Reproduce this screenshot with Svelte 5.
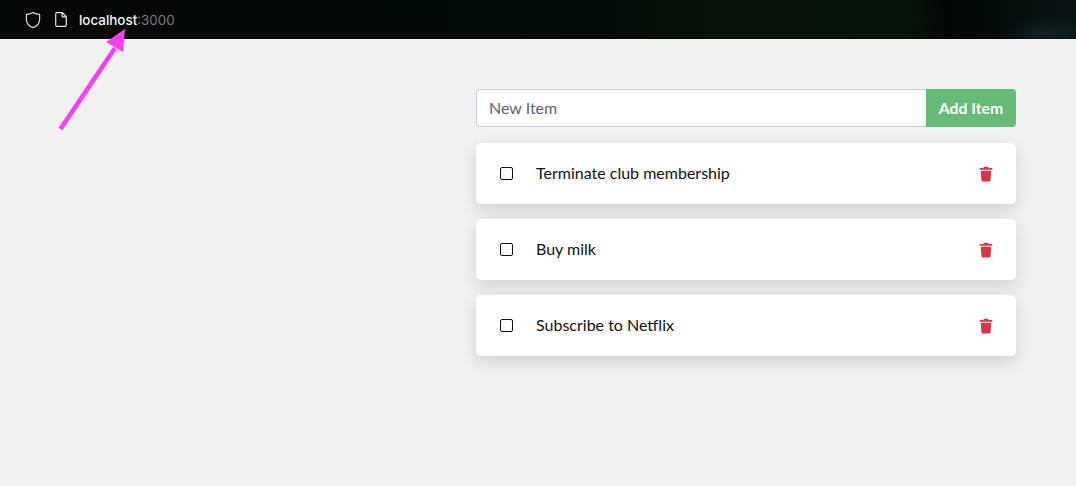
<script>
	let items = [
		{ id: 1, text: 'Terminate club membership' },
		{ id: 2, text: 'Buy milk' },
		{ id: 3, text: 'Subscribe to Netflix' }
	];
</script>

<div class="page">
	<header class="urlbar">
		<svg class="shield" width="16" height="18" viewBox="0 0 16 18">
			<path d="M8 1.4 C10 2.6 12 3.2 14.6 3.4 V8.5 C14.6 12.4 11.8 15.2 8 16.6 C4.2 15.2 1.4 12.4 1.4 8.5 V3.4 C4 3.2 6 2.6 8 1.4 Z" fill="none" stroke="#d8dad9" stroke-width="1.2" stroke-linejoin="round"/>
		</svg>
		<svg class="doc" width="12" height="15" viewBox="0 0 12 15">
			<path d="M2 .7 H7.4 L11.3 4.6 V13 Q11.3 14.3 10 14.3 H2 Q.7 14.3 .7 13 V2 Q.7 .7 2 .7 Z M7.2 .9 V4.8 H11.1" fill="none" stroke="#e4e6e5" stroke-width="1.2" stroke-linejoin="round"/>
		</svg>
		<span class="host">localhost<span class="port">:3000</span></span>
	</header>

	<main class="content">
		<div class="list">
			<form class="add" on:submit|preventDefault>
				<input type="text" placeholder="New Item" />
				<button type="submit">Add Item</button>
			</form>

			{#each items as item (item.id)}
				<div class="card">
					<span class="check"></span>
					<span class="label">{item.text}</span>
					<svg class="trash" width="14" height="16" viewBox="0 0 14 16">
						<path d="M5 .8 H9 L9.6 2 H13.3 V3.7 H.7 V2 H4.4 Z" fill="#dc3545"/>
						<path d="M1.7 4.7 H12.3 L11.5 14.6 Q11.4 15.6 10.4 15.6 H3.6 Q2.6 15.6 2.5 14.6 Z" fill="#dc3545"/>
					</svg>
				</div>
			{/each}
		</div>
	</main>

	<svg class="arrow" width="90" height="120" viewBox="0 0 90 120">
		<line x1="10.5" y1="109" x2="65" y2="28" stroke="#ff3df5" stroke-width="4.6"/>
		<polygon points="75,9 56,22 73,32" fill="#ff3df5"/>
	</svg>
</div>

<style>
	:global(body) {
		background: #f2f2f2;
	}

	.page {
		min-height: 486px;
		font-family: Lato, sans-serif;
	}

	.urlbar {
		height: 39px;
		box-sizing: border-box;
		padding-left: 25px;
		display: flex;
		align-items: center;
		background:
			radial-gradient(ellipse 40px 16px at 1045px 33px, #132026 0%, transparent 100%),
			radial-gradient(ellipse 70px 30px at 880px 18px, #08130f 0%, transparent 100%),
			linear-gradient(90deg, #040807 0%, #040a08 56%, #071009 66%, #061209 84%, #020504 88%, #0a1412 100%);
	}

	.doc {
		margin-left: 14px;
	}

	.host {
		margin-left: 12px;
		font-family: Inter, sans-serif;
		font-size: 13.4px;
		font-weight: 500;
		color: #f2f3f3;
	}

	.port {
		color: #77797a;
		font-weight: 400;
	}

	.content {
		padding: 50px 60px 0 0;
		display: flex;
		justify-content: flex-end;
	}

	.list {
		width: 540px;
	}

	.add {
		display: flex;
		height: 38px;
		margin-bottom: 16px;
	}

	input {
		flex: 1;
		min-width: 0;
		box-sizing: border-box;
		padding: 0 12px 2px;
		border: 1px solid #c5cdd6;
		border-right: 0;
		border-radius: 4px 0 0 4px;
		background: #fff;
		font: 16px Lato, sans-serif;
		outline: none;
	}

	input::placeholder {
		color: #5c646b;
		opacity: 1;
	}

	button {
		width: 90px;
		padding: 0 0 2px;
		border: 0;
		border-radius: 0 4px 4px 0;
		background: #66bb77;
		color: #fff;
		font: 700 15.8px Lato, sans-serif;
	}

	.card {
		height: 61px;
		margin-bottom: 15px;
		padding: 0 23px 0 24px;
		box-sizing: border-box;
		display: flex;
		align-items: center;
		background: #fff;
		border-radius: 5px;
		box-shadow: 0 6px 18px rgba(0, 0, 0, 0.14);
	}

	.check {
		width: 13px;
		height: 13px;
		margin-bottom: 1px;
		box-sizing: border-box;
		border: 1.6px solid #111;
		border-radius: 2px;
	}

	.label {
		flex: 1;
		margin-left: 23px;
		padding-bottom: 2px;
		font-size: 16px;
		color: #111;
	}

	.arrow {
		position: absolute;
		left: 50px;
		top: 20px;
	}
</style>
